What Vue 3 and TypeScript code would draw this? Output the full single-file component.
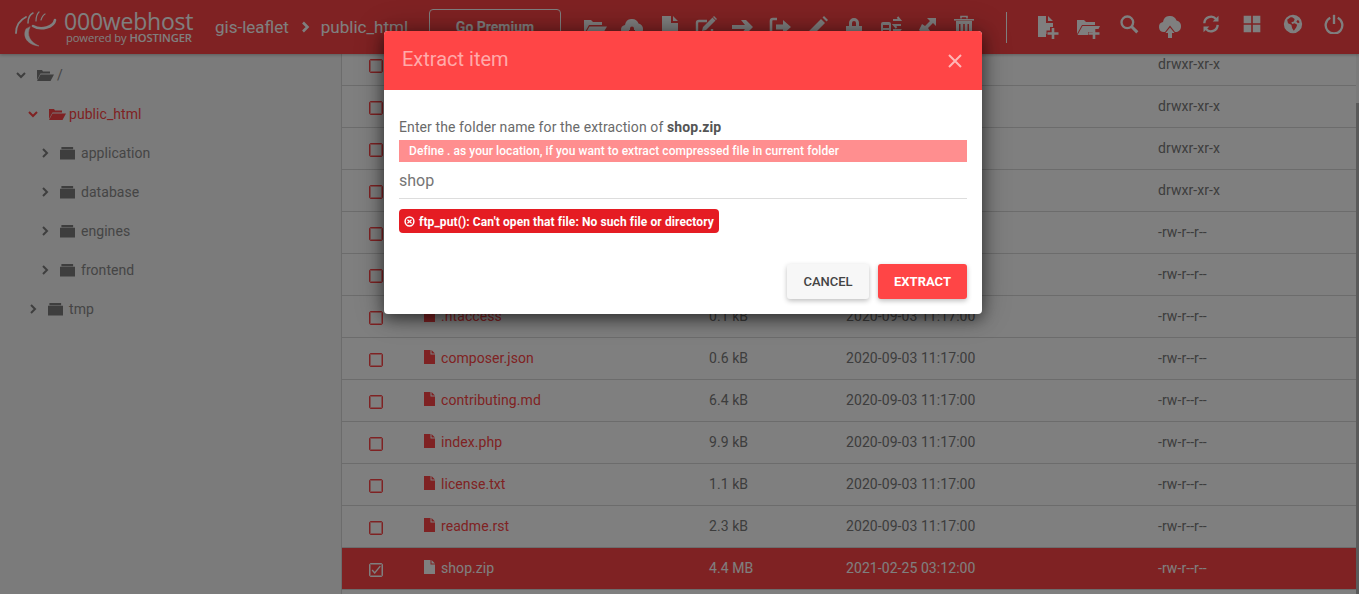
<script setup lang="ts">
type P = { d: string; s?: number }
const icons: Record<string, P[]> = {
  folderOpen: [{ d: 'M1 19V5h7l2 2h9v3H6zM6.500 11.500H24L19 20H1.500z' }],
  cloudLock: [{ d: 'M6 20a5 5 0 0 1-1-9.900A7 7 0 0 1 18.500 8.500 6 6 0 0 1 19 20zM9 20h6v-5h-1v-1.500a2 2 0 0 0-4 0V15H9z' }],
  file: [{ d: 'M5 1h9v7h7v15H5zM16 1l5 5h-5z' }],
  edit: [{ d: 'M18 14v5a2 2 0 0 1-2 2H5a2 2 0 0 1-2-2V8a2 2 0 0 1 2-2h8', s: 2.400 }, { d: 'M9 12L18.500 2.500l3 3L12 15l-4 1zM20 1l3 3-1 1-3-3z' }],
  arrow: [{ d: 'M1 10h13l-4-5h5l7 7-7 7h-5l4-5H1z' }],
  signOut: [{ d: 'M9 4H5a2 2 0 0 0-2 2v12a2 2 0 0 0 2 2h4', s: 2.600 }, { d: 'M8 9.500h7V5l8 7-8 7v-4.500H8z' }],
  pencil: [{ d: 'M3 17L16 4l4 4L7 21l-5 1zM17.500 2.500l1.500-1.500 4 4-1.500 1.500z' }],
  lock: [{ d: 'M4 11h16v11H4zM7 11V8a5 5 0 0 1 10 0v3h-3V8a2 2 0 0 0-4 0v3z' }],
  archive: [{ d: 'M2 9a2 2 0 0 1 2-2h6a2 2 0 0 1 2 2v13H2zM4 10v3h6v-3zM4 15v5h6v-5z' }, { d: 'M14 5h7l-2.500-3M22 10h-7l2.500 3M14 15h7l-2 3', s: 2 }],
  expand: [{ d: 'M4 15l6 6 5-5-2-3 5-5 3 3V3h-9l3 3-5 5-3-2z' }],
  trash: [{ d: 'M4 6h16v17H4zM7 9v11h1.500V9zM11.200 9v11h1.600V9zM15.500 9v11H17V9z' }, { d: 'M2 4h20v1.600H2z' }, { d: 'M9 3.500V1.500h6v2', s: 1.600 }],
  filePlus: [{ d: 'M3 1h8v7h7v4h-3v3.500h-3.500V19H11v3H3zM13 1l5 5h-5z' }, { d: 'M16.700 13h2.600v4.200h4.200v2.600h-4.200V24h-2.600v-4.200h-4.200v-2.600h4.200z' }],
  folderPlus: [{ d: 'M1 19V5h7l2 2h9v3H6zM6.500 11H24l-1.500 3H17v3h-5v3H1.500z' }, { d: 'M16.700 13h2.600v4.200h4.200v2.600h-4.200V24h-2.600v-4.200h-4.200v-2.600h4.200z' }],
  search: [{ d: 'M10 3a7 7 0 1 0 0 14 7 7 0 0 0 0-14z', s: 2.800 }, { d: 'M15 15l7 7', s: 3.600 }],
  cloudUp: [{ d: 'M6 17a5 5 0 0 1-1-9.900A7 7 0 0 1 18.500 5.500 6 6 0 0 1 19 17h-2l-5-6.500L7 17z' }, { d: 'M12 12.500l4.500 5.500H14v5h-4v-5H7.500z' }],
  refresh: [{ d: 'M4 11a8 8 0 0 1 14-5', s: 2.800 }, { d: 'M20 13a8 8 0 0 1-14 5', s: 2.800 }, { d: 'M21 2v7h-7zM3 22v-7h7z' }],
  th: [{ d: 'M2 2h9v9H2zM13 2h9v9h-9zM2 13h9v9H2zM13 13h9v9h-9z' }],
  globe: [{ d: 'M12 1a11 11 0 1 1 0 22 11 11 0 0 1 0-22zM9 4L5 7l1 4 4 2 1 4 2 3 3-4 1-3-3-2-3 1-1-2 3-1 1-3-3-2zM18 7l-2 2 2 2 2-1z' }],
  power: [{ d: 'M7.500 4.500a10 10 0 1 0 9 0', s: 2.800 }, { d: 'M12 1v11', s: 2.800 }]
}
const leftTools = ['folderOpen', 'cloudLock', 'file', 'edit', 'arrow', 'signOut', 'pencil', 'lock', 'archive', 'expand', 'trash']
const rightTools = ['filePlus', 'folderPlus', 'search', 'cloudUp', 'refresh', 'th', 'globe', 'power']
const bigTools = ['filePlus', 'folderPlus', 'cloudUp']

const tree = [
  { label: '/', level: 0, open: true, active: false },
  { label: 'public_html', level: 1, open: true, active: true },
  { label: 'application', level: 2, open: false, active: false },
  { label: 'database', level: 2, open: false, active: false },
  { label: 'engines', level: 2, open: false, active: false },
  { label: 'frontend', level: 2, open: false, active: false },
  { label: 'tmp', level: 1, open: false, active: false }
]

const dirPerm = 'drwxr-xr-x'
const filePerm = '-rw-r--r--'
const stamp = '2020-09-03 11:17:00'
const rows = [
  { name: 'application', kind: 'dir', size: '', date: '', perm: dirPerm },
  { name: 'database', kind: 'dir', size: '', date: '', perm: dirPerm },
  { name: 'engines', kind: 'dir', size: '', date: '', perm: dirPerm },
  { name: 'frontend', kind: 'dir', size: '', date: '', perm: dirPerm },
  { name: '.editorconfig', kind: 'file', size: '0.2 kB', date: stamp, perm: filePerm },
  { name: '.gitignore', kind: 'file', size: '0.4 kB', date: stamp, perm: filePerm },
  { name: '.htaccess', kind: 'file', size: '0.1 kB', date: stamp, perm: filePerm },
  { name: 'composer.json', kind: 'file', size: '0.6 kB', date: stamp, perm: filePerm },
  { name: 'contributing.md', kind: 'file', size: '6.4 kB', date: stamp, perm: filePerm },
  { name: 'index.php', kind: 'file', size: '9.9 kB', date: stamp, perm: filePerm },
  { name: 'license.txt', kind: 'file', size: '1.1 kB', date: stamp, perm: filePerm },
  { name: 'readme.rst', kind: 'file', size: '2.3 kB', date: stamp, perm: filePerm },
  { name: 'shop.zip', kind: 'file', size: '4.4 MB', date: '2021-02-25 03:12:00', perm: filePerm, selected: true }
]
</script>

<template>
  <div class="page">
    <header class="nav">
      <div class="logo">
        <svg class="swirl" viewBox="0 0 44 40" width="44" height="40" fill="none" stroke="#fff" stroke-linecap="round">
          <path d="M42 11C41 18 28 22 20 17" stroke-width="2.600" />
          <path d="M17 18C13 26 17 33 26 37 15 36 9 28 13 20z" fill="#fff" stroke-width="0.500" />
          <path d="M3 24C3 17 7 11 13 8" stroke-width="1.800" />
          <path d="M20 4c-4 2-5 6-5 10" stroke-width="1.500" />
          <path d="M26 3c-2 2-3 5-3 9" stroke-width="1.200" />
          <path d="M32 5c-2 1-3 3-4 6" stroke-width="1.200" />
        </svg>
        <div class="logo-text">
          <div class="brand">000webhost</div>
          <div class="powered">powered by <b>HOSTINGER</b></div>
        </div>
      </div>
      <div class="crumbs">
        <span>gis-leaflet</span>
        <svg width="9" height="12" viewBox="0 0 9 12"><path d="M2 1.500L6.500 6 2 10.500" fill="none" stroke="#fff" stroke-width="2.600" /></svg>
        <span>public_html</span>
      </div>
      <button class="premium">Go Premium</button>
      <div class="tools left-tools">
        <span v-for="t in leftTools" :key="t" class="cell">
          <svg viewBox="0 0 24 24" width="24" height="24">
            <path
              v-for="(p, i) in icons[t]"
              :key="i"
              :d="p.d"
              :fill="p.s ? 'none' : '#fff'"
              :stroke="p.s ? '#fff' : 'none'"
              :stroke-width="p.s"
              fill-rule="evenodd"
            />
          </svg>
        </span>
      </div>
      <div class="divider"></div>
      <div class="tools right-tools">
        <span v-for="t in rightTools" :key="t" class="cell" :class="{ big: bigTools.includes(t) }">
          <svg viewBox="0 0 24 24">
            <path
              v-for="(p, i) in icons[t]"
              :key="i"
              :d="p.d"
              :fill="p.s ? 'none' : '#fff'"
              :stroke="p.s ? '#fff' : 'none'"
              :stroke-width="p.s"
              fill-rule="evenodd"
            />
          </svg>
        </span>
      </div>
    </header>

    <div class="content">
      <aside class="side">
        <div
          v-for="n in tree"
          :key="n.label"
          class="node"
          :class="[`lvl${n.level}`, { active: n.active, shut: !n.open }]"
        >
          <svg class="chev" viewBox="0 0 10 10" width="10" height="10">
            <path v-if="n.open" d="M1 3l4 4 4-4" fill="none" stroke="currentColor" stroke-width="2" />
            <path v-else d="M3 1l4 4-4 4" fill="none" stroke="currentColor" stroke-width="2" />
          </svg>
          <svg v-if="n.open" class="folder" viewBox="0 0 18 14" width="18" height="14">
            <path d="M1 12V2h5l1 1.500h7V5.500H4.500zM4.500 6.500H18L14.500 13H1z" fill="currentColor" />
          </svg>
          <svg v-else class="folder" viewBox="0 0 16 14" width="15" height="14">
            <path d="M0 3.500h16V14H0zM1.500 .5h12.500v2.500H1.500z" fill="currentColor" />
          </svg>
          <span>{{ n.label }}</span>
        </div>
      </aside>

      <main class="list">
        <div class="table">
          <div v-for="r in rows" :key="r.name" class="row" :class="{ selected: r.selected }">
            <span class="check">
              <svg v-if="r.selected" viewBox="0 0 14 14" width="12" height="12">
                <path d="M2.500 7l3 3.500L12 2.500" fill="none" stroke="#fff" stroke-width="1.600" />
              </svg>
            </span>
            <span class="name">
              <svg v-if="r.kind === 'file'" viewBox="0 0 11 14" width="11" height="14">
                <path d="M0 0h6.500v4.500H11V14H0zM7.500 0L11 3.500H7.500z" fill="currentColor" />
              </svg>
              <svg v-else viewBox="0 0 16 14" width="15" height="14">
                <path d="M0 3.500h16V14H0zM1.500 .5h12.500v2.500H1.500z" fill="currentColor" />
              </svg>
              {{ r.name }}
            </span>
            <span>{{ r.size }}</span>
            <span>{{ r.date }}</span>
            <span class="perm">{{ r.perm }}</span>
          </div>
        </div>
        <div class="scrollbar"><div class="thumb"></div></div>
      </main>
    </div>

    <div class="backdrop"></div>

    <section class="modal">
      <div class="m-head">
        <h2>Extract item</h2>
        <svg viewBox="0 0 14 14" width="14" height="14" class="close">
          <path d="M1 1l12 12M13 1L1 13" stroke="#ffb6b6" stroke-width="2" fill="none" />
        </svg>
      </div>
      <div class="m-body">
        <p class="lead">Enter the folder name for the extraction of <b>shop.zip</b></p>
        <div class="hint">Define . as your location, if you want to extract compressed file in current folder</div>
        <div class="field">shop</div>
        <div class="err">
          <svg viewBox="0 0 12 12" width="11" height="11">
            <circle cx="6" cy="6" r="4.800" fill="none" stroke="#fff" stroke-width="1.600" />
            <path d="M3.800 4.200l4.400 3.600M8.200 4.200L3.800 7.800" stroke="#fff" stroke-width="1.400" />
          </svg>
          <span>ftp_put(): Can't open that file: No such file or directory</span>
        </div>
        <div class="actions">
          <button class="btn cancel">CANCEL</button>
          <button class="btn extract">EXTRACT</button>
        </div>
      </div>
    </section>
  </div>
</template>

<style>
html, body { margin: 0; overflow: hidden; background: #fff; }
</style>

<style scoped>
.page {
  position: relative;
  width: 1359px;
  height: 594px;
  overflow: hidden;
  font-family: Roboto, "Liberation Sans", sans-serif;
  background: #fff;
}
.nav {
  position: relative;
  z-index: 2;
  height: 54px;
  background: #ff4546;
  color: #fff;
  display: flex;
  align-items: center;
  box-shadow: 0 1px 3px rgba(0, 0, 0, .25);
}
.logo { display: flex; align-items: center; margin-left: 13px; width: 202px; flex: none; }
.swirl { margin-top: 4px; margin-right: 7px; flex: none; }
.logo-text { color: #fff; line-height: 1; margin-top: 1px; }
.brand { font-family: "Open Sans", sans-serif; font-size: 23px; line-height: 21px; font-weight: 400; letter-spacing: -.2px; white-space: nowrap; }
.powered { font-family: "Open Sans", sans-serif; font-size: 11.200px; line-height: 12px; white-space: nowrap; letter-spacing: -.1px; margin-left: 2px; }
.powered b { font-weight: 600; }
.crumbs {
  display: flex;
  align-items: center;
  width: 214px;
  flex: none;
  font-size: 17px;
}
.crumbs svg { margin: 0 11px 0 12px; flex: none; }
.premium {
  width: 132px;
  height: 37px;
  flex: none;
  border: 1px solid #fff;
  border-radius: 4px;
  background: transparent;
  color: #fff;
  font: 700 14px Roboto, sans-serif;
  padding: 0;
}
.tools { display: flex; align-items: center; flex: none; }
.cell { display: flex; align-items: center; justify-content: center; flex: none; }
.left-tools { margin-left: 16px; }
.left-tools .cell { width: 36.900px; height: 24px; }
.right-tools { margin-left: 20px; margin-top: -6px; }
.right-tools .cell { width: 41px; height: 24px; }
.right-tools .cell svg { width: 20px; height: 20px; }
.right-tools .cell.big svg { width: 24px; height: 24px; margin-top: 5px; }
.divider { width: 1px; height: 31px; background: #fff; margin-left: 23px; flex: none; margin-top: 1px; }

.content { display: flex; height: 540px; overflow: hidden; }
.side { width: 341px; flex: none; background: #f6f6f6; border-right: 1px solid #d8d8d8; padding-top: 1px; }
.node { height: 39px; display: flex; align-items: center; font-size: 14px; color: #7d7d7d; }
.node span { color: #8b8b8b; margin-left: 3px; letter-spacing: .05px; }
.node.shut span { margin-left: 6px; }
.node.active, .node.active span { color: #ff4546; }
.lvl0 { padding-left: 16px; }
.lvl1 { padding-left: 28px; }
.lvl2 { padding-left: 40px; }
.node .chev { margin-right: 10px; flex: none; }
.node .folder { flex: none; }

.list { position: relative; flex: 1; min-width: 0; overflow: hidden; padding-right: 3px; }
.table { margin-top: -10px; }
.row {
  display: grid;
  grid-template-columns: 82px 285px 137px 312px 1fr;
  align-items: center;
  height: 42px;
  box-sizing: border-box;
  border-bottom: 1px solid #d9d9d9;
  padding-bottom: 2px;
  font-size: 14px;
  letter-spacing: .07px;
  color: #7a7a7a;
}
.row.selected { background: #ff4546; color: #fff; border-bottom-color: #d9d9d9; }
.check {
  width: 14px;
  height: 14px;
  box-sizing: border-box;
  margin-left: 27px;
  margin-top: 5px;
  border: 1px solid #ff4546;
  box-shadow: inset 0 0 0 1px rgba(255, 69, 70, .5);
  border-radius: 2px;
  display: flex;
  align-items: center;
  justify-content: center;
}
.selected .check { border-color: #fff; box-shadow: inset 0 0 0 1px rgba(255, 255, 255, .5); }
.name { color: #ff4546; display: flex; align-items: center; gap: 6px; }
.name svg { margin-top: -2px; flex: none; }
.selected .name { color: #fff; }
.scrollbar { position: absolute; top: 0; right: 0; bottom: 0; width: 3px; background: #f4f4f4; }
.thumb { position: absolute; top: 49px; left: 0; right: 0; bottom: 0; background: #b5b5b5; }

.backdrop { position: absolute; inset: 0; z-index: 3; background: rgba(0, 0, 0, .5); }
.modal {
  position: absolute;
  z-index: 4;
  left: 384px;
  top: 31px;
  width: 598px;
  height: 283px;
  border-radius: 4px;
  background: #fff;
  box-shadow: 0 5px 15px rgba(0, 0, 0, .5), 0 0 30px rgba(0, 0, 0, .3);
}
.m-head {
  height: 59px;
  background: #ff4546;
  border-radius: 4px 4px 0 0;
  display: flex;
  align-items: center;
  justify-content: space-between;
  padding: 0 20px 0 18px;
}
.m-head h2 { margin: -3px 0 0; font-size: 20px; font-weight: 400; color: #ffaaaa; }
.close { margin-top: 1px; }
.m-body { padding: 28px 15px 15px; color: #666; }
.lead { margin: 0 0 4px; font-size: 14px; line-height: 18px; color: #6a6a6a; letter-spacing: .1px; }
.lead b { color: #555; }
.hint {
  height: 22px;
  line-height: 22px;
  background: #ff8e8f;
  color: #fff;
  font-size: 12px;
  font-weight: 500;
  padding-left: 10px;
  letter-spacing: .06px;
}
.field {
  height: 36px;
  line-height: 37px;
  font-size: 16px;
  color: #757575;
  border-bottom: 1px solid #ddd;
}
.err {
  display: inline-flex;
  align-items: center;
  gap: 4px;
  margin-top: 10px;
  height: 24px;
  padding: 0 5px;
  background: #e51c23;
  color: #fff;
  border-radius: 4px;
  font-size: 12px;
  font-weight: 700;
  vertical-align: top;
  letter-spacing: .1px;
}
.err span { margin-top: 1px; }
.actions { display: flex; justify-content: flex-end; gap: 9px; margin-top: 31px; }
.btn {
  height: 35px;
  border: 0;
  border-radius: 3px;
  font: 500 13px Roboto, sans-serif;
  padding: 0;
  box-shadow: 0 2px 5px rgba(0, 0, 0, .25);
}
.cancel { width: 82px; background: #f7f7f7; color: #444; }
.extract { width: 89px; background: #ff4546; color: #fff; font-weight: 700; }
</style>
